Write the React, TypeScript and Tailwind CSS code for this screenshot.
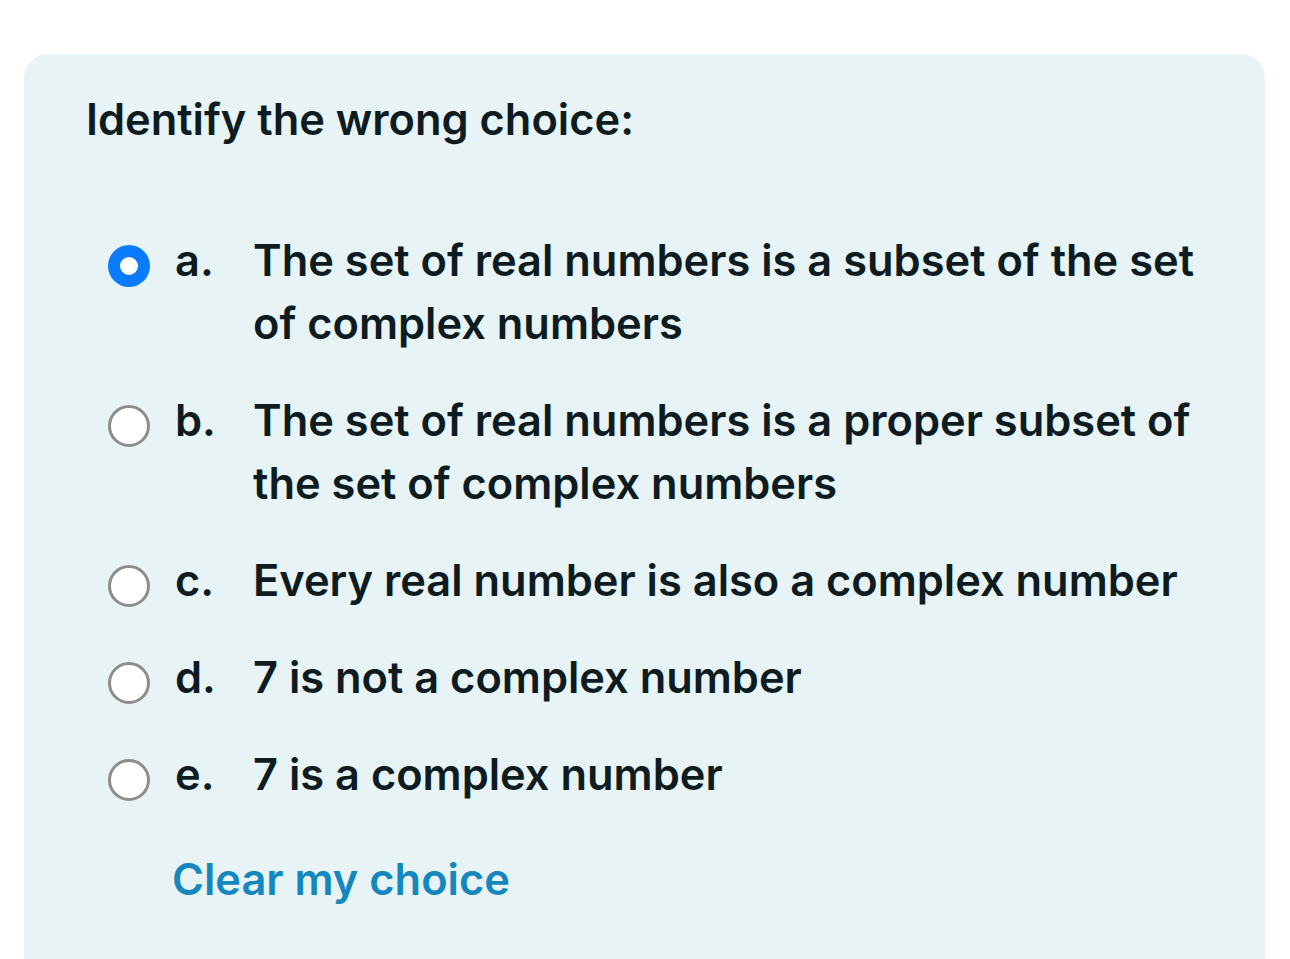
import React from 'react';

const OPTIONS = [
  { key: 'a', text: 'The set of real numbers is a subset of the set of complex numbers', checked: true },
  { key: 'b', text: 'The set of real numbers is a proper subset of the set of complex numbers', checked: false },
  { key: 'c', text: 'Every real number is also a complex number', checked: false },
  { key: 'd', text: '7 is not a complex number', checked: false },
  { key: 'e', text: '7 is a complex number', checked: false },
];

function Radio({ checked }: { checked: boolean }) {
  if (checked) {
    return (
      <span className="block w-[42px] h-[42px] rounded-full bg-[#0a7bff] flex items-center justify-center shrink-0">
        <span className="block w-[18px] h-[18px] rounded-full bg-white" />
      </span>
    );
  }
  return <span className="block w-[42px] h-[42px] rounded-full border-[3.5px] border-[#8d8d8d] bg-white shrink-0" />;
}

export default function App() {
  return (
    <div className="bg-white pt-[54px] pl-[24px] pr-[25px] overflow-hidden h-[959px] font-['Inter',sans-serif] text-[#0e1c22]">
      <div className="bg-[#e7f3f5] rounded-[24px] h-[960px] pl-[62px] pr-[30px] pt-[34px]">
        <h2 className="text-[43.4px] leading-[63px] font-semibold">Identify the wrong choice:</h2>

        <div className="mt-[78px] pl-[22px] flex flex-col gap-[34px]">
          {OPTIONS.map(o => (
            <label key={o.key} className="flex items-start cursor-pointer">
              <span className="block mt-[16px] shrink-0">
                <Radio checked={o.checked} />
              </span>
              <span className="block w-[103px] pl-[25px] shrink-0 text-[43.4px] leading-[63px] font-semibold">{o.key}.</span>
              <span className="block text-[43.4px] leading-[63px] font-semibold max-w-[960px]">{o.text}</span>
            </label>
          ))}
        </div>

        <button className="mt-[42px] ml-[86px] text-[43.4px] leading-[63px] font-semibold text-[#1587bf]">Clear my choice</button>
      </div>
    </div>
  );
}
